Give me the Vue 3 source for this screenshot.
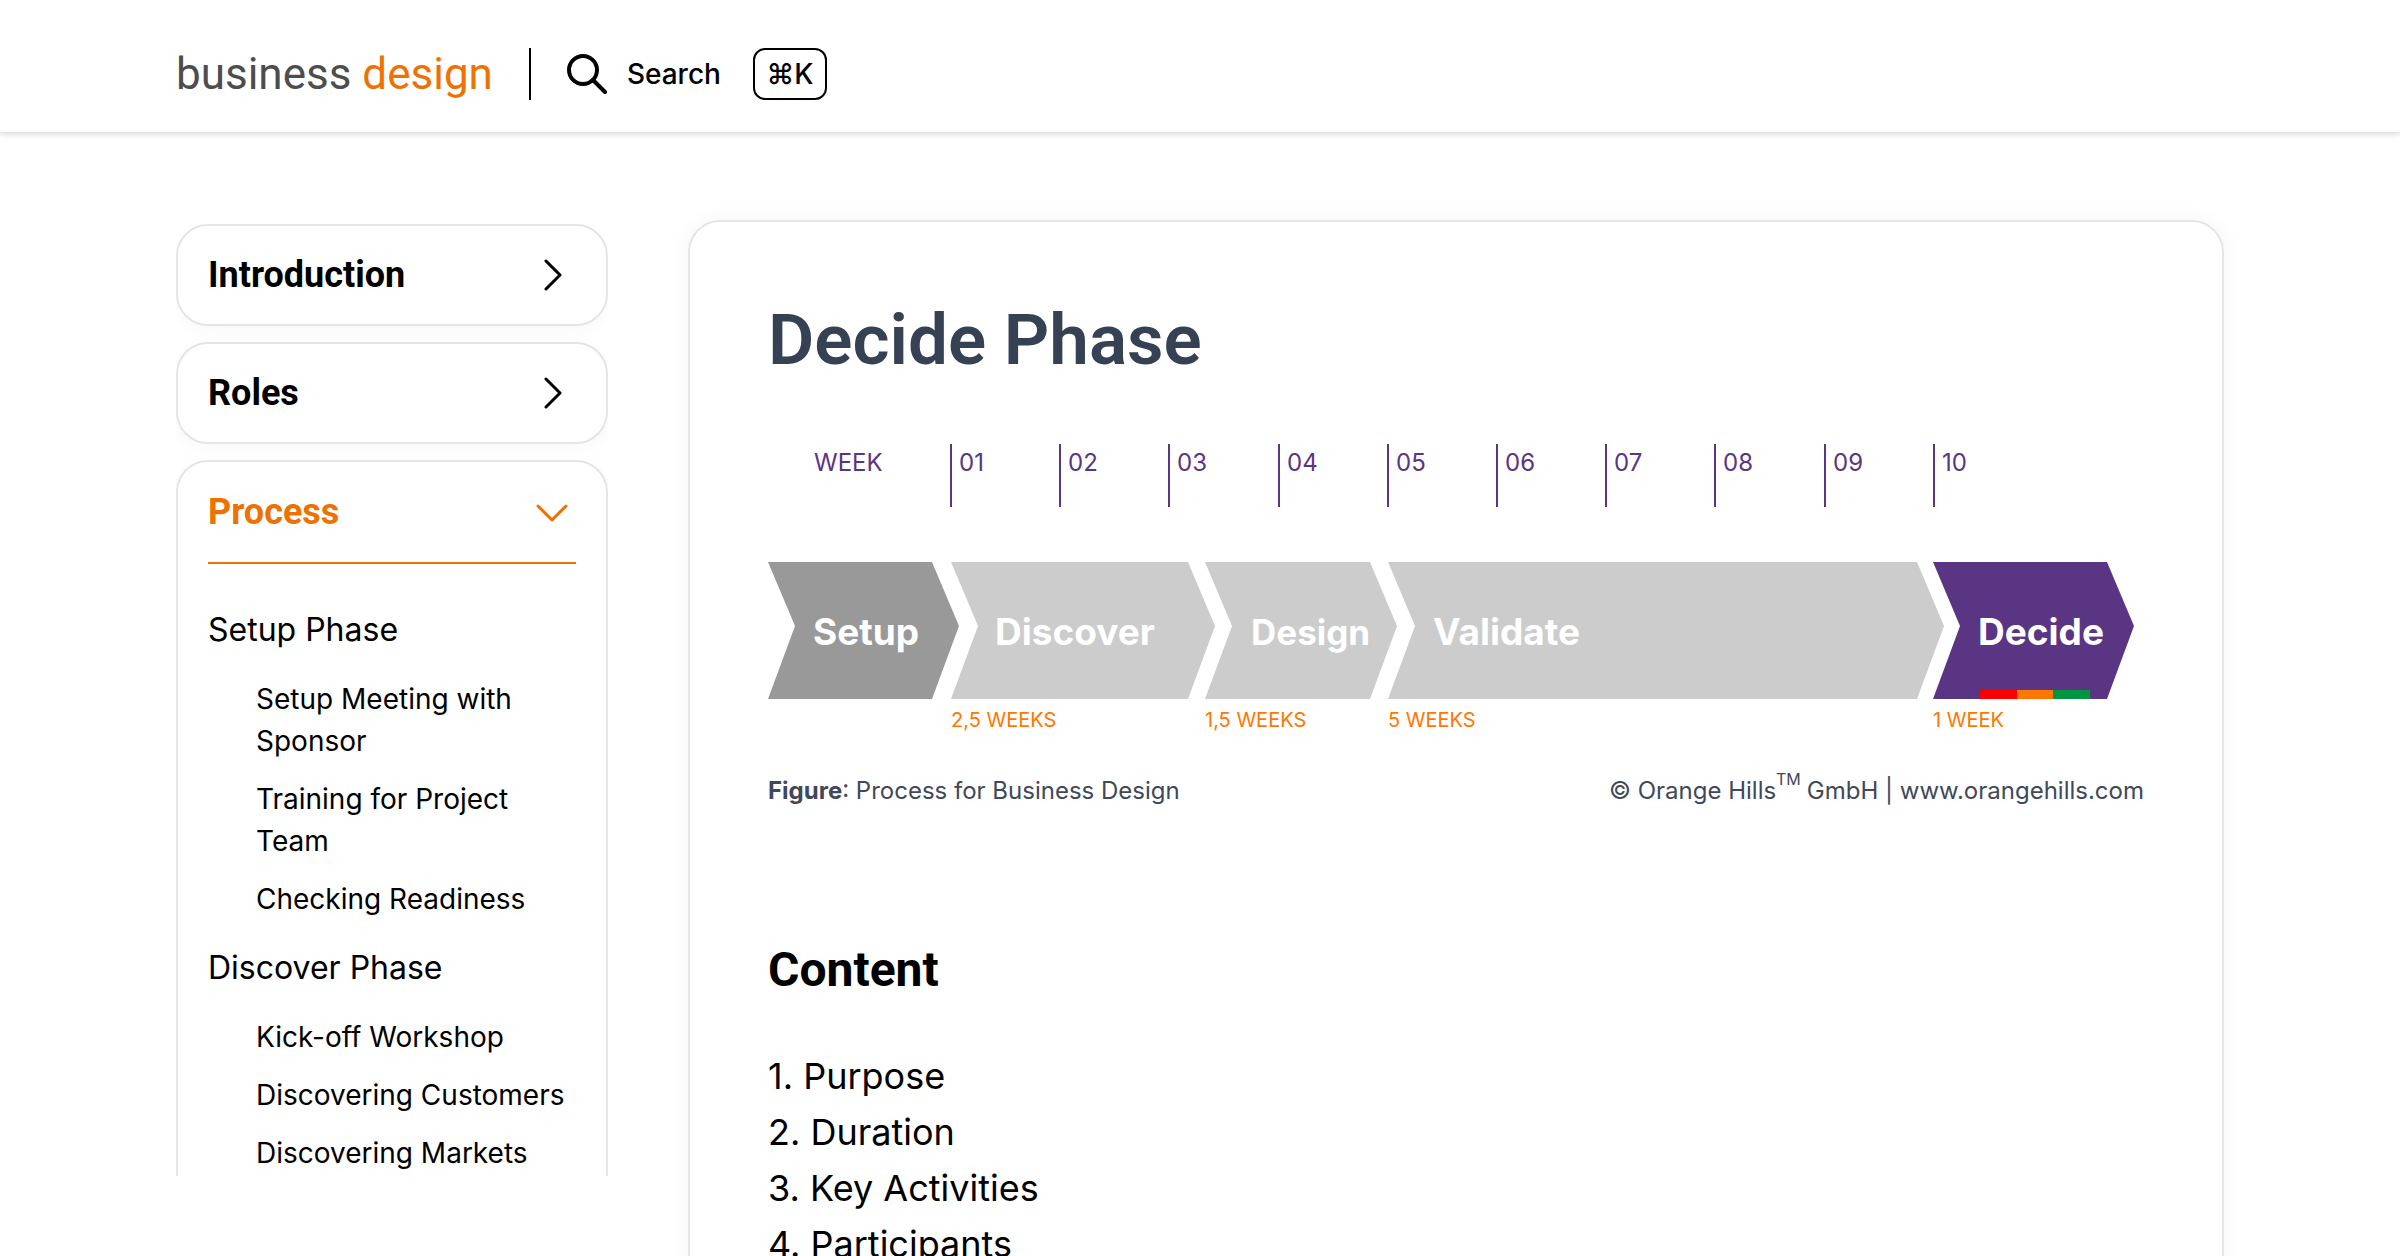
<script setup>
import { ref } from 'vue'

const sections = ref([
  { title: 'Introduction', open: false, groups: [] },
  { title: 'Roles', open: false, groups: [] },
  {
    title: 'Process',
    open: true,
    groups: [
      {
        title: 'Setup Phase',
        pages: ['Setup Meeting with Sponsor', 'Training for Project Team', 'Checking Readiness'],
      },
      {
        title: 'Discover Phase',
        pages: ['Kick-off Workshop', 'Discovering Customers', 'Discovering Markets'],
      },
    ],
  },
])

const contents = ['Purpose', 'Duration', 'Key Activities', 'Participants']

const weeks = Array.from({ length: 10 }, (_, i) => ({
  label: String(i + 1).padStart(2, '0'),
  x: Math.round(183 + i * 109.2),
}))

// x: left edge, end: right shoulder before the arrow tip
const phases = [
  { name: 'Setup', x: 0, end: 164, text: 45, fill: '#999999', size: 37 },
  { name: 'Discover', x: 183, end: 420, text: 227, fill: '#cccccc', size: 37, duration: '2,5 WEEKS' },
  { name: 'Design', x: 437, end: 602, text: 483, fill: '#cccccc', size: 35, duration: '1,5 WEEKS' },
  { name: 'Validate', x: 620, end: 1149, text: 665, fill: '#cccccc', size: 37, duration: '5 WEEKS' },
  { name: 'Decide', x: 1165, end: 1339, text: 1210, fill: '#593584', size: 37, duration: '1 WEEK' },
]

const arrow = (p) =>
  `${p.x},118 ${p.end},118 ${p.end + 27},182 ${p.end},255 ${p.x},255 ${p.x + 27},182`
</script>

<template>
  <div class="page">
    <header class="topbar">
      <div class="container topbar-inner">
        <a class="logo" href="#">business <span>design</span></a>
        <button class="search" type="button">
          <svg class="search-icon" viewBox="0 0 40 40" aria-hidden="true">
            <circle cx="16" cy="16" r="14" />
            <path d="M26 26 38 38" />
          </svg>
          <span>Search</span>
          <kbd>⌘K</kbd>
        </button>
      </div>
    </header>

    <div class="container layout">
      <nav class="sidebar" aria-label="Handbook">
        <section v-for="s in sections" :key="s.title" class="panel" :class="{ open: s.open }">
          <button class="panel-head" type="button" :aria-expanded="s.open" @click="s.open = !s.open">
            <span>{{ s.title }}</span>
            <svg class="chevron" viewBox="0 0 32 32" aria-hidden="true">
              <path v-if="s.open" d="M2 10 16 24 30 10" />
              <path v-else d="M10 2 24 16 10 30" />
            </svg>
          </button>
          <ul v-if="s.open && s.groups.length" class="groups">
            <li v-for="g in s.groups" :key="g.title">
              <a href="#">{{ g.title }}</a>
              <ul class="pages">
                <li v-for="p in g.pages" :key="p"><a href="#">{{ p }}</a></li>
              </ul>
            </li>
          </ul>
        </section>
      </nav>

      <main class="article">
        <h1>Decide Phase</h1>

        <svg class="figure" viewBox="0 0 1376 368" role="img" aria-label="Process for Business Design">
          <g class="weeks">
            <text x="46" y="27">WEEK</text>
            <g v-for="w in weeks" :key="w.label">
              <rect :x="w.x - 1" y="0" width="2" height="63" />
              <text :x="w.x + 8" y="27">{{ w.label }}</text>
            </g>
          </g>
          <g v-for="p in phases" :key="p.name">
            <polygon :points="arrow(p)" :fill="p.fill" />
            <text class="phase" :x="p.text" y="201" :font-size="p.size">{{ p.name }}</text>
            <text v-if="p.duration" class="duration" :x="p.x" y="283">{{ p.duration }}</text>
          </g>
          <rect x="1212" y="246" width="37" height="9" fill="#ff0000" />
          <rect x="1249" y="246" width="36" height="9" fill="#ff7700" />
          <rect x="1285" y="246" width="37" height="9" fill="#009640" />
          <g class="caption">
            <text x="0" y="355"><tspan class="strong">Figure</tspan>: Process for Business Design</text>
            <text x="841" y="355">© Orange Hills</text>
            <text class="mark" x="1008" y="341">TM</text>
            <text x="1376" y="355" text-anchor="end">GmbH | www.orangehills.com</text>
          </g>
        </svg>

        <h2>Content</h2>
        <ol class="contents">
          <li v-for="(c, i) in contents" :key="c"><a href="#">{{ i + 1 }}. {{ c }}</a></li>
        </ol>
      </main>
    </div>
  </div>
</template>

<style>
html {
  scrollbar-width: none;
}
body {
  margin: 0;
  background: #fff;
}
</style>

<style scoped>
.page {
  font-family: Inter, 'Noto Sans', sans-serif;
  color: #000;
}
.page *,
.page *::before {
  box-sizing: border-box;
}
a {
  color: inherit;
  text-decoration: none;
}
button {
  border: 0;
  padding: 0;
  background: none;
  color: inherit;
  font: inherit;
  cursor: pointer;
}
ul,
ol {
  margin: 0;
  padding: 0;
  list-style: none;
}
.container {
  max-width: 2048px;
  margin: 0 auto;
}

.topbar {
  box-shadow: 0 2px 6px rgba(0, 0, 0, 0.16);
}
.topbar-inner {
  display: flex;
  align-items: center;
  height: 132px;
  padding-top: 16px;
}
.logo {
  font-family: Roboto, sans-serif;
  font-size: 44px;
  line-height: 52px;
  color: #4d4d4d;
  white-space: nowrap;
}
.logo span {
  color: #ee7203;
}
.search {
  display: flex;
  align-items: center;
  height: 52px;
  margin-left: 36px;
  padding-left: 36px;
  border-left: 2px solid #000;
  font-size: 28px;
  font-weight: 500;
}
.search-icon {
  width: 40px;
  height: 40px;
  margin-right: 20px;
  fill: none;
  stroke: #000;
  stroke-width: 4;
  stroke-linecap: round;
}
.search kbd {
  display: flex;
  align-items: center;
  justify-content: center;
  width: 74px;
  height: 52px;
  margin-left: 32px;
  border: 2px solid #000;
  border-radius: 12px;
  font: inherit;
}

.layout {
  display: flex;
  align-items: flex-start;
  gap: 80px;
  padding-top: 88px;
}
.sidebar {
  display: flex;
  flex-direction: column;
  gap: 16px;
  flex: 0 0 432px;
  height: calc(100vh - 304px);
  margin-top: 4px;
  overflow: hidden;
}
.panel {
  flex: none;
  padding: 0 30px;
  border: 2px solid #e5e5e5;
  border-radius: 32px;
  box-shadow: 0 4px 16px rgba(0, 0, 0, 0.03);
}
.panel-head {
  display: flex;
  align-items: center;
  justify-content: space-between;
  width: 100%;
  height: 98px;
  font-family: Roboto, sans-serif;
  font-size: 36px;
  font-weight: 700;
}
.open .panel-head {
  height: 102px;
  border-bottom: 2px solid #ee7203;
  color: #ee7203;
}
.chevron {
  width: 32px;
  height: 32px;
  margin-right: 8px;
  fill: none;
  stroke: currentColor;
  stroke-width: 3;
  stroke-linecap: round;
  stroke-linejoin: round;
}
.groups {
  display: flex;
  flex-direction: column;
  gap: 24px;
  padding: 42px 0;
  font-size: 32px;
  line-height: 48px;
}
.pages {
  display: flex;
  flex-direction: column;
  gap: 16px;
  padding: 24px 0 0 48px;
  font-size: 28px;
  line-height: 42px;
}

.article {
  flex: 1;
  min-width: 0;
  padding: 78px;
  border: 2px solid #e5e5e5;
  border-radius: 32px;
  box-shadow: 0 0 24px rgba(0, 0, 0, 0.04);
}
h1 {
  margin: 0 0 64px;
  font-family: Roboto, sans-serif;
  font-size: 71px;
  font-weight: 600;
  line-height: 80px;
  color: #364153;
}
.figure {
  display: block;
  width: 100%;
  height: auto;
  font-family: Inter, sans-serif;
}
.weeks {
  fill: #593584;
  font-size: 24px;
}
.phase {
  fill: #fff;
  font-weight: 700;
}
.duration {
  fill: #ff7700;
  font-size: 20px;
}
.caption {
  fill: #404859;
  font-size: 24px;
}
.strong {
  font-weight: 700;
}
.mark {
  font-size: 16px;
}
h2 {
  margin: 128px 0 48px;
  font-family: Roboto, sans-serif;
  font-size: 48px;
  font-weight: 700;
  line-height: 60px;
}
.contents {
  font-size: 36px;
  line-height: 56px;
}
</style>
